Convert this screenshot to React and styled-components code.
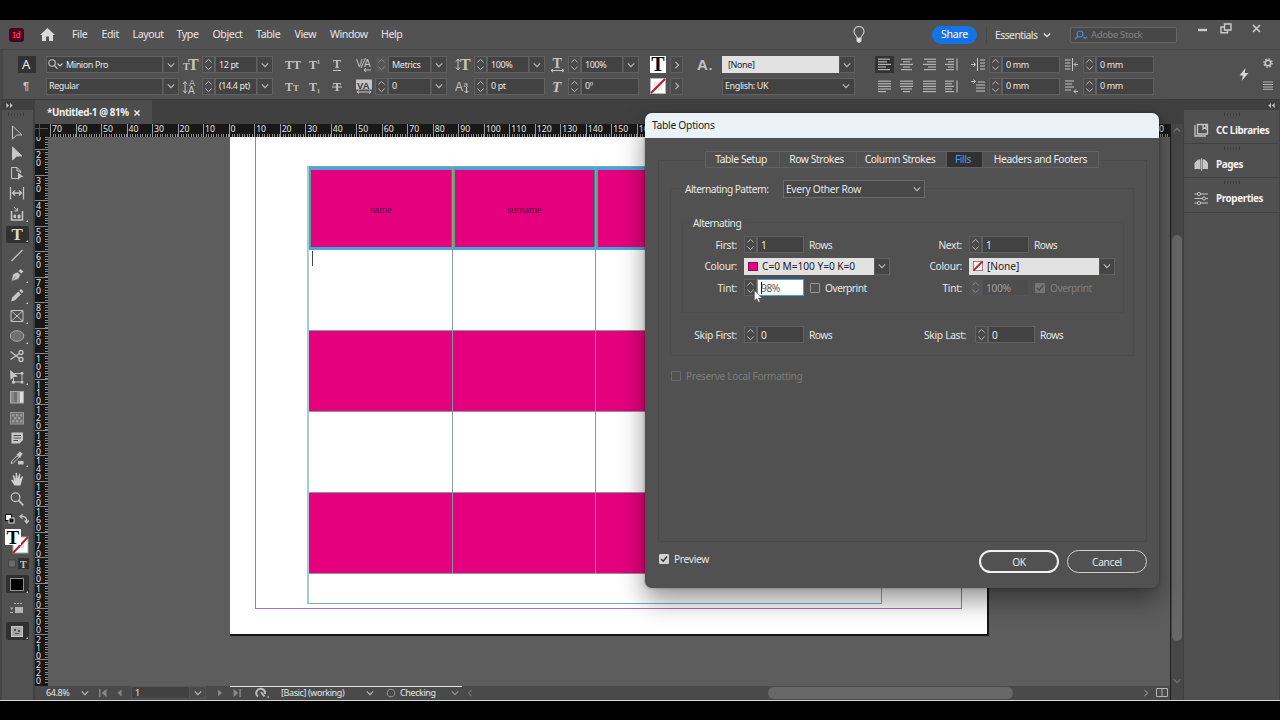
import React from 'react'
import styled, { createGlobalStyle } from 'styled-components'

const GlobalStyle = createGlobalStyle`
  * { box-sizing: border-box; }
  body {
    margin: 0;
    background: #000;
    overflow: hidden;
    font-family: "Noto Sans", "Open Sans", sans-serif;
    font-size: 10.2px;
    letter-spacing: -0.3px;
    color: #e6e6e6;
  }
  svg { display: block; flex: none; }
`

const Screen = styled.div`
  width: 1280px;
  height: 720px;
  padding: 20px 0 19px;
  background: #000;
`
const AppWindow = styled.div`
  position: relative;
  height: 681px;
  display: flex;
  flex-direction: column;
  background: #535353;
  border-bottom: 1px solid #d4d8d6;
`

/* ---------- menu bar ---------- */

const MenuBar = styled.div`
  height: 30px;
  flex: none;
  display: flex;
  align-items: center;
  background: #525252;
  border-bottom: 1px solid #454545;
  padding-left: 9px;
`
const Logo = styled.div`
  width: 15px;
  height: 14px;
  border-radius: 3px;
  background: #49021f;
  color: #ff3366;
  font-size: 8.5px;
  font-weight: 600;
  line-height: 13px;
  text-align: center;
`
const HomeBox = styled.div`
  margin: 0 17px 0 16px;
`
const MenuItem = styled.div`
  width: ${p => p.$w}px;
  font-size: 10.6px;
  line-height: 14px;
  margin-top: -1px;
  letter-spacing: -0.4px;
  white-space: nowrap;
`
const BulbBox = styled.div`
  margin-left: 444px;
  margin-top: -1px;
  width: 79px;
`
const Share = styled.div`
  width: 45px;
  height: 18px;
  border-radius: 9px;
  background: #1473e6;
  color: #fff;
  font-size: 10.6px;
  line-height: 17px;
  text-align: center;
`
const Workspace = styled.div`
  display: flex;
  align-items: center;
  gap: 6px;
  margin-left: 9px;
  padding-left: 8px;
  border-left: 1px solid #494949;
  width: 84px;
  height: 18px;
  font-size: 10.4px;
  letter-spacing: -0.55px;
  white-space: nowrap;
`
const StockSearch = styled.div`
  width: 107px;
  height: 16px;
  border: 1px solid #666;
  border-radius: 2px;
  background: #474747;
  color: #838383;
  display: flex;
  align-items: center;
  gap: 3px;
  padding-left: 3px;
  font-size: 9.4px;
`
const WindowButtons = styled.div`
  display: flex;
  align-items: center;
  margin: -13px 0 0 21px;
  svg { margin-right: 13px; }
  svg:nth-child(2) { margin-right: 20px; }
`

/* ---------- control bar ---------- */

const ControlBar = styled.div`
  height: 50px;
  flex: none;
  display: flex;
  align-items: flex-start;
  background: #515151;
  border-bottom: 1px solid #3c3c3c;
  border-left: 3px solid #474747;
  padding: 6px 0 0 15px;
  font-size: 9px;
  letter-spacing: -0.4px;
`
const Stack = styled.div`
  flex: none;
  display: grid;
  grid-template-rows: 17px 17px;
  row-gap: 4.5px;
  width: ${p => p.$w}px;
  margin-left: ${p => p.$ml || 0}px;
`
const Cell = styled.div`
  display: flex;
  align-items: center;
  justify-content: center;
  background: ${p => (p.$on ? '#323232' : 'transparent')};
`
const Spin = styled.div`
  flex: none;
  width: 13px;
  height: 17px;
  border: 1px solid ${p => (p.$dim ? '#545454' : '#606060')};
  background: ${p => (p.$dim ? '#565656' : '#4a4a4a')};
  display: flex;
  align-items: center;
  justify-content: center;
`
const Input = styled.div`
  flex: none;
  width: ${p => p.$w}px;
  height: 17px;
  border: 1px solid ${p => (p.$light ? '#e2e2e2' : p.$dim ? '#535353' : '#616161')};
  background: ${p => (p.$light ? '#e2e2e2' : p.$dim ? '#4d4d4d' : '#424242')};
  color: ${p => (p.$light ? '#222' : p.$dim ? '#a0a0a0' : '#e6e6e6')};
  display: flex;
  align-items: center;
  gap: 3px;
  padding-left: ${p => (p.$pl === undefined ? 3 : p.$pl)}px;
  line-height: 14px;
  white-space: nowrap;
`
const LanguageSelect = styled(Input)`
  justify-content: space-between;
  padding: 0 4px 0 2px;
`
const DropBtn = styled.div`
  flex: none;
  width: 16px;
  height: 17px;
  border: 1px solid #616161;
  border-left-color: #565656;
  background: #454545;
  display: flex;
  align-items: center;
  justify-content: center;
`
const Row = styled.div`
  display: flex;
  align-items: center;
`
const Field = styled(Row)`
  height: 17px;
`
const Quick = styled.div`
  margin: 12px 0 0 85px;
`
const FarRight = styled.div`
  display: flex;
  flex-direction: column;
  align-items: center;
  gap: 13px;
  margin: 2px 0 0 14px;
`

/* ---------- body ---------- */

const Body = styled.div`
  flex: 1;
  min-height: 0;
  display: flex;
  background: #404040;
`
const Tools = styled.div`
  width: 33px;
  flex: none;
  margin-right: 2px;
  display: flex;
  flex-direction: column;
  background: #515151;
  border-left: 2px solid #454545;
`
const StripHead = styled.div`
  height: 10px;
  flex: none;
  display: flex;
  align-items: center;
  justify-content: ${p => (p.$end ? 'flex-end' : 'flex-start')};
  padding: 0 4px;
  background: #404040;
`
const Grip = styled.div`
  width: 17px;
  height: 3px;
  margin: ${p => p.$m};
  background: repeating-linear-gradient(90deg, #3e3e3e 0 1px, transparent 1px 3px);
`
const ToolSlot = styled.div`
  position: relative;
  height: 20.4px;
  flex: none;
  display: flex;
  align-items: center;
  justify-content: center;
  width: 24px;
  margin-left: 3px;
`
const ToolFace = styled.div`
  width: 23px;
  height: ${p => p.$h || 17}px;
  border-radius: 2px;
  display: flex;
  align-items: center;
  justify-content: center;
  background: ${p => (p.$on ? '#303030' : 'transparent')};
`
const Corner = styled.i`
  position: absolute;
  right: 1px;
  bottom: 2px;
  border: 1.5px solid;
  border-color: transparent #ddd #ddd transparent;
`
const ToolFoot = styled.div`
  display: flex;
  flex-direction: column;
  margin: 1px 0 0 3px;
  width: 24px;
`
const FootRow = styled.div`
  position: relative;
  height: ${p => p.$h}px;
  display: flex;
  align-items: center;
  justify-content: center;
  gap: 4px;
`

const DocArea = styled.div`
  width: 1135px;
  flex: none;
  display: flex;
  flex-direction: column;
`
const TabBar = styled.div`
  height: 24px;
  flex: none;
  background: #404040;
`
const DocTab = styled.div`
  width: 117px;
  height: 24px;
  display: flex;
  align-items: center;
  gap: 5px;
  padding: 1px 0 0 12px;
  background: #4d4d4d;
  font-weight: 700;
  font-size: 9.8px;
  letter-spacing: -0.38px;
  color: #f0f0f0;
  white-space: nowrap;
`
const RulerRow = styled.div`
  height: 13px;
  flex: none;
  display: flex;
  background: #181818;
`
const RulerCorner = styled.div`
  width: 13px;
  flex: none;
  background:
    linear-gradient(#555, #555) 4px 0 / 1px 13px no-repeat,
    linear-gradient(#555, #555) 0 4px / 13px 1px no-repeat;
`
const HRuler = styled.div`
  flex: 1;
  display: flex;
  overflow: hidden;
  padding-left: 2px;
`
const HMark = styled.div`
  flex: none;
  width: 25.53px;
  height: 13px;
  border-left: 1px solid #9a9a9a;
  padding-left: 1px;
  font-size: 8.7px;
  line-height: 10px;
  letter-spacing: 0;
  background: repeating-linear-gradient(90deg, transparent 0 1.55px, #8c8c8c 1.55px 2.55px) 0 100% / 100% 3px no-repeat;
`
const WorkRow = styled.div`
  flex: 1;
  min-height: 0;
  display: flex;
`
const VRuler = styled.div`
  width: 13px;
  flex: none;
  overflow: hidden;
  background: #181818;
`
const VMarks = styled.div`
  margin-top: -13.2px;
`
const VMark = styled.div`
  height: 25.5px;
  border-top: 1px solid #8a8a8a;
  padding: 1px 0 0 1px;
  font-size: 8.7px;
  line-height: 8px;
  letter-spacing: 0;
  background: repeating-linear-gradient(180deg, transparent 0 1.55px, #8c8c8c 1.55px 2.55px) 100% 0 / 3px 100% no-repeat;
`
const Digit = styled.div`
  height: 8px;
`
const Canvas = styled.div`
  position: relative;
  flex: 1;
  overflow: hidden;
  background: #5d5d5d;
`
const Paper = styled.div`
  position: absolute;
  left: 182px;
  top: 0;
  width: 759px;
  height: 499px;
  background: #fff;
  border: solid #141414;
  border-width: 0 2px 2px 0;
`
const MarginGuide = styled.div`
  position: absolute;
  left: 25px;
  top: 0;
  width: 707px;
  height: 472px;
  border: solid #a873bd;
  border-width: 0 1px 1px 1px;
`
const TextFrame = styled.div`
  position: absolute;
  left: 77px;
  top: 29px;
  width: 575px;
  height: 438px;
  border: 1px solid #76abc8;
  border-left: 2px solid #a3cbdd;
`
const Table = styled.div`
  display: grid;
  grid-template-columns: 144px repeat(3, 143.4px);
  grid-template-rows: 83px repeat(4, 81px);
`
const TableCell = styled.div`
  display: flex;
  align-items: center;
  justify-content: center;
  padding-top: 1px;
  border: solid ${p => (p.$head ? '#a8a06a' : '#8697a8')};
  border-width: ${p => (p.$head ? '0 1px 0 0' : '0 1px 1px 0')};
  background: ${p => (p.$fill ? '#e5007d' : '#fff')};
  box-shadow: ${p => (p.$head ? 'inset 0 3px #45a6d8, inset 0 -3px #45a6d8, inset 2px 0 #4fa98e, inset -1px 0 #3f7f80' : 'none')};
  color: #57123c;
  font: 10.6px "Liberation Serif", serif;
`
const TextCaret = styled.div`
  position: absolute;
  left: 82px;
  top: 114px;
  width: 1px;
  height: 15px;
  background: #444;
`

const StatusBar = styled.div`
  height: 14px;
  flex: none;
  display: flex;
  align-items: center;
  background: linear-gradient(#e4e4e4, #e4e4e4) 195px 0 / 232px 1px no-repeat #4a4a4a;
  font-size: 9px;
  letter-spacing: -0.4px;
  padding: 0 0 1px 11px;
`
const StatusItem = styled.div`
  flex: none;
  width: ${p => p.$w}px;
  display: flex;
  align-items: center;
  white-space: nowrap;
`
const PageField = styled.div`
  width: 59px;
  height: 13px;
  line-height: 11px;
  padding-left: 3px;
  background: #414141;
  border: 1px solid #555;
`
const PageDrop = styled.div`
  width: 16px;
  height: 13px;
  display: flex;
  align-items: center;
  justify-content: center;
  border: 1px solid #555;
  border-left: 0;
`
const HTrack = styled.div`
  flex: 1;
  height: 13px;
  display: flex;
  align-items: center;
  padding-left: 291px;
`
const HThumb = styled.div`
  width: 245px;
  height: 12px;
  border-radius: 6px;
  background: #686868;
  margin-right: 129px;
`

const VScroll = styled.div`
  width: 13px;
  flex: none;
  margin-top: 24px;
  display: flex;
  flex-direction: column;
  align-items: center;
  justify-content: space-between;
  background: #474747;
  border-left: 1px solid #1f1f1f;
  padding: 2px 0 15px;
`
const VThumb = styled.div`
  width: 10px;
  height: 406px;
  margin: 101px 0 auto;
  border-radius: 5px;
  background: #676767;
`
const Dock = styled.div`
  flex: 1;
  display: flex;
  flex-direction: column;
  margin-left: 1px;
  background: #505050;
  border-right: 1px solid #434343;
`
const DockPanel = styled.div`
  height: 34.2px;
  flex: none;
  border-bottom: 1px solid #414141;
`
const DockLabel = styled.div`
  display: flex;
  align-items: center;
  gap: 7px;
  height: 16px;
  margin-top: 6px;
  padding-left: 10px;
  font-weight: 700;
  font-size: 9.9px;
  letter-spacing: -0.4px;
  color: #f2f2f2;
  white-space: nowrap;
`

/* ---------- dialog ---------- */

const Dialog = styled.div`
  position: absolute;
  left: 645px;
  top: 93px;
  width: 514px;
  height: 475px;
  border-radius: 7px;
  overflow: hidden;
  background: #515151;
  box-shadow: 0 12px 26px rgba(0, 0, 0, 0.42), 0 0 3px rgba(0, 0, 0, 0.35);
`
const DialogTitle = styled.div`
  height: 25px;
  padding-left: 7px;
  line-height: 25px;
  font-size: 10.3px;
  background: #eaf2f7;
  letter-spacing: -0.3px;
  color: #222;
`
const TabPanel = styled.div`
  margin: 22px 12px 0 13px;
  height: 382px;
  border: 1px solid #4a4a4a;
`
const Tabs = styled.div`
  display: flex;
  width: 394px;
  margin: -10px 0 0 46px;
  border: 1px solid #626262;
`
const Tab = styled.div`
  width: ${p => p.$w}px;
  height: 15px;
  line-height: 15px;
  text-align: center;
  padding-right: 3px;
  font-size: 10.3px;
  letter-spacing: -0.4px;
  white-space: nowrap;
  border-right: 1px solid #5c5c5c;
  background: ${p => (p.$on ? '#303030' : '#515151')};
  color: ${p => (p.$on ? '#4b9be8' : '#ececec')};
  &:last-child { border-right: 0; padding-right: 0; }
`
const PatternBox = styled.div`
  margin: 20px 12px 0 11px;
  height: 168px;
  border: 1px solid #4c4c4c;
`
const PatternRow = styled.div`
  display: flex;
  align-items: center;
  width: 242px;
  height: 17px;
  margin: -9px 0 0 12px;
  padding-left: 2px;
  background: #515151;
`
const PatternLabel = styled.div`
  width: 98px;
  letter-spacing: -0.55px;
`
const Select = styled.div`
  width: 142px;
  height: 18px;
  display: flex;
  align-items: center;
  justify-content: space-between;
  padding: 0 3px 0 2px;
  border: 1px solid #6a6a6a;
  background: #484848;
`
const AlternatingBox = styled.div`
  margin: 25px 9px 0 11px;
  height: 91px;
  border: 1px solid #4d4d4d;
`
const Legend = styled.div`
  width: 54px;
  margin: -7px 0 0 9px;
  padding-left: 1px;
  line-height: 14px;
  letter-spacing: -0.5px;
  background: #515151;
`
const Pair = styled.div`
  display: grid;
  grid-template-columns: ${p => p.$cols};
  height: ${p => p.$h || 21.6}px;
  margin-top: ${p => p.$mt || 0}px;
  align-items: center;
`
const Label = styled.div`
  text-align: right;
  padding-right: ${p => p.$pr || 7}px;
  white-space: nowrap;
`
const Unit = styled.div`
  margin-left: 5px;
  letter-spacing: -0.5px;
  color: ${p => (p.$dim ? '#7f7f7f' : '#e6e6e6')};
`
const ColourInput = styled(Input)`
  gap: 4px;
  letter-spacing: -0.05px;
`
const Check = styled.div`
  flex: none;
  width: 10px;
  height: 10px;
  margin-left: ${p => p.$ml || 0}px;
  border: 1px solid ${p => p.$c || '#999'};
  background: ${p => p.$bg || 'transparent'};
  border-radius: 1px;
  display: flex;
  align-items: center;
  justify-content: center;
`
const TintInput = styled(Input)`
  background: #fff;
  border-color: #4a9ce0;
  color: #555;
  letter-spacing: -0.4px;
`
const InputCaret = styled.i`
  width: 1px;
  height: 12px;
  margin-right: -4px;
  background: #111;
`
const Swatch = styled.i`
  width: 10px;
  height: 9px;
  border: 1px solid #8c1058;
  background: #e5007d;
`
const Preserve = styled.div`
  display: flex;
  align-items: center;
  gap: 5px;
  margin: 13px 0 0 12px;
  letter-spacing: -0.35px;
  color: #7b7b7b;
`
const Footer = styled.div`
  display: flex;
  align-items: center;
  height: 24px;
  margin-top: 5px;
  padding: 0 12px 0 14px;
`
const PreviewText = styled.div`
  margin: 0 auto 0 5px;
`
const PillButton = styled.div`
  width: 80px;
  height: 23px;
  margin-left: 8px;
  margin-top: 5px;
  border: ${p => (p.$primary ? '2px solid #f2f2f2' : '1px solid #cfcfcf')};
  border-radius: 12px;
  display: flex;
  align-items: center;
  justify-content: center;
`
const Pointer = styled.div`
  position: absolute;
  left: 754px;
  top: 270px;
`

/* ---------- icons ---------- */

const Chevron = ({ s = 8, dir = 'down', c = '#bdbdbd', w = 1.1 }) => {
  const r = { down: 0, left: 90, up: 180, right: 270 }[dir]
  return (
    <svg width={s} height={s} viewBox="0 0 8 8">
      <path d="M0.8 2.4 L4 5.6 L7.2 2.4" transform={`rotate(${r} 4 4)`} fill="none" stroke={c} strokeWidth={w} />
    </svg>
  )
}

const Stepper = ({ dim }) => (
  <Spin $dim={dim}>
    <svg width="9" height="15" viewBox="0 0 9 15">
      <path d="M1.3 5.4 L4.5 2.4 L7.7 5.4 M1.3 9.6 L4.5 12.6 L7.7 9.6" fill="none" stroke={dim ? '#8a8a8a' : '#b8b8b8'} strokeWidth="1" />
    </svg>
  </Spin>
)

const Drop = () => <DropBtn><Chevron /></DropBtn>

const Glyph = ({ w = 18, children }) => (
  <svg width={w} height="17" viewBox={`0 0 ${w} 17`} fill="none" stroke="#c4c4c4" strokeWidth="1">{children}</svg>
)

const L = ({ x, y, s = 13, f = 'Liberation Serif', b = 700, c = '#c4c4c4', children }) => (
  <text x={x} y={y} fontFamily={`"${f}"`} fontSize={s} fontWeight={b} fill={c} stroke="none" letterSpacing="0">{children}</text>
)

const lineSets = {
  left: [[0, 12], [0, 9], [0, 13], [0, 8], [0, 12]],
  center: [[1, 12], [3, 10], [0, 13], [3, 10], [1, 12]],
  right: [[1, 13], [4, 13], [0, 13], [5, 13], [1, 13]],
  spine: [[1, 9], [3, 9], [0, 9], [3, 9], [1, 9]],
  jleft: [[0, 13], [0, 13], [0, 13], [0, 13], [0, 8]],
  jcenter: [[0, 13], [0, 13], [0, 13], [1, 12], [3, 10]],
  jall: [[0, 13], [0, 13], [0, 13], [0, 13], [0, 13]],
  away: [[0, 9], [0, 7], [0, 9], [0, 7], [0, 9]],
}
const Lines = ({ kind }) => (
  <svg width="13" height="13" viewBox="0 0 13 13" stroke="#b4b4b4" strokeWidth="1.2">
    {lineSets[kind].map(([a, b], i) => <path key={i} d={`M${a} ${1.2 + i * 2.6} H${b}`} />)}
    {(kind === 'spine' || kind === 'away') && <path d="M12 0.5 V12.5" />}
  </svg>
)

const IndentIcon = ({ kind }) => (
  <Glyph w={15}>
    {kind === 'left' && <path d="M6.5 2 V15 M9 4 H14 M9 7 H14 M9 10 H14 M9 13 H14 M0 8.5 H4 M2.5 6.5 L4.8 8.5 L2.5 10.5" />}
    {kind === 'right' && <path d="M8.5 2 V15 M1 4 H6.5 M1 7 H6.5 M1 10 H6.5 M1 13 H6.5 M10.5 8.5 H14 M12 6.5 L10 8.5 L12 10.5" />}
    {kind === 'first' && <path d="M7 4 H14 M5 7 H14 M5 10 H14 M5 13 H14 M0 3.5 H4 M2.5 1.5 L4.5 3.5 L2.5 5.5" />}
    {kind === 'last' && <path d="M1 3 H10 M1 6 H8 M1 9 H10 M1 12 H7 M10 13.5 H14 M12 11.5 L10 13.5 L12 15.5" />}
  </Glyph>
)

const NoneSwatch = ({ s = 16 }) => (
  <svg width={s} height={s} viewBox="0 0 16 16">
    <rect x="0.5" y="0.5" width="15" height="15" fill="#fff" stroke={s < 16 ? '#8a3038' : '#b9b9b9'} />
    <rect x="4" y="4" width="8" height="8" fill="#e9e9e9" />
    <path d="M1 15 L15 1" stroke="#b3202c" strokeWidth={s < 16 ? 3 : 2.2} />
  </svg>
)

const DoubleArrow = ({ left }) => (
  <svg width="7" height="5" viewBox="0 0 7 5" fill="#c9c9c9">
    {left ? <path d="M3 0 V5 L0.4 2.5Z M6.6 0 V5 L4 2.5Z" /> : <path d="M0.4 0 L3 2.5 L0.4 5Z M4 0 L6.6 2.5 L4 5Z" />}
  </svg>
)

const toolIcons = [
  { d: <path d="M3.5 2 L13 11 L7.8 11 L3.5 15Z" /> },
  { d: <path d="M3.5 2 L13 11 L7.8 11 L3.5 15Z" fill="#c8c8c8" /> },
  { d: <g><path d="M9 13.5 H2.5 V2.5 H8 L11.5 6 V8 M8 2.5 V6 H11.5" /><path d="M9 7.5 L14.5 12 L11.5 12.3 L9 15Z" fill="#c8c8c8" stroke="none" /></g> },
  { d: <path d="M1.5 2 V14.5 M14.5 2 V14.5 M3.5 8 H12.5 M6 5.5 L3.5 8 L6 10.5 M10 5.5 L12.5 8 L10 10.5" strokeWidth="1.3" /> },
  { d: <g><path d="M2.5 5 V14 H13.5 V5" strokeWidth="1.6" /><path d="M5 1 L8 4.5 M8.5 2 V5 H5.5" /><path d="M5 12 V9 H6.5 V12 M9 12 V9 H11 V12Z" fill="#c8c8c8" /></g>, more: 1 },
  { on: 1, d: <L x={2.6} y={14} s={17} c="#d8d8d8">T</L>, more: 1 },
  { d: <path d="M2.5 14 L13.5 3" strokeWidth="1.3" /> },
  { d: <path d="M2 14.5 L4 7 L8.5 5 L11.5 8 L9.5 12 L2 14.5 M9.3 4 L11.8 1.8 L14.5 4.5 L12.3 7Z M2.5 14 L7 9.5" fill="#c8c8c8" stroke="#5a5a5a" strokeWidth="0.7" />, more: 1 },
  { d: <path d="M2 14.5 L3.2 10.5 L9.3 4.5 L12 7.2 L6 13.3Z M10.2 3.6 L12 2 L14.5 4.6 L12.9 6.3Z" fill="#c8c8c8" stroke="none" />, more: 1 },
  { d: <path d="M2 2.5 H14 V13.5 H2Z M2 2.5 L14 13.5 M14 2.5 L2 13.5" />, more: 1 },
  { d: <ellipse cx="8" cy="8" rx="6.8" ry="5.3" fill="#707070" stroke="#a8a8a8" />, more: 1 },
  { d: <g strokeWidth="1.3"><circle cx="12" cy="4.5" r="2" /><circle cx="12" cy="11.5" r="2" /><path d="M10.5 5.5 L1.5 11.5 M10.5 10.5 L1.5 3.5" /></g> },
  { d: <g><path d="M5.5 4.5 H13 V13 H4.5 V9" /><path d="M1 1 L9 7.5 L5 8 L1.5 11Z M3 12 h3 v2.5 h-3Z M11.8 3 h2.5 v2.5 h-2.5Z M11.8 12 h2.5 v2.5 h-2.5Z" fill="#c8c8c8" stroke="none" /></g>, more: 1 },
  { d: <g stroke="none"><path d="M1.5 2.5 H5 V14 H1.5Z" fill="#888" /><path d="M5 2.5 H8 V14 H5Z" fill="#707070" /><path d="M8 2.5 H11 V14 H8Z" fill="#9a9a9a" /><path d="M11 2.5 H14.5 V14 H11Z" fill="#dedede" /><rect x="1.5" y="2.5" width="13" height="11.5" stroke="#aaa" /></g> },
  { d: <g><rect x="1.5" y="2.5" width="13" height="11.5" fill="#6c6c6c" stroke="#999" /><path d="M3 4 h2.5 v2.5 H3Z M7 4 h2.5 v2.5 H7Z M11 4 h2.5 v2.5 H11Z M5 7 h2.5 v2.5 H5Z M9 7 h2.5 v2.5 H9Z M3 10 h2.5 v2.5 H3Z M7 10 h2.5 v2.5 H7Z M11 10 h2.5 v2.5 H11Z" fill="#9a9a9a" stroke="none" /></g> },
  { d: <g><path d="M2.5 2.5 H14 V10 L10.5 13.5 H2.5Z" fill="#c8c8c8" stroke="none" /><path d="M4.5 5.5 H12 M4.5 8 H12 M4.5 10.5 H9" stroke="#4a4a4a" /></g> },
  { d: <g><path d="M2 13.5 L2.8 11 L8 5.8 L9.8 7.6 L4.5 12.8Z" /><path d="M7.5 4.5 L9 3.5 L11 1.5 L13.8 3.8 L12 6 L11.3 8.2Z M9 11 h5.5 v3.5 h-5.5Z" fill="#c8c8c8" stroke="none" /></g>, more: 1 },
  { d: <path d="M5.5 14.5 L2 9.2 L3 8.5 L5.2 10 L3.6 4.5 L4.8 4 L6.7 8 L6.6 2 L7.9 1.8 L8.7 7.6 L10.2 2.6 L11.4 3 L10.7 8.2 L13 5 L14 5.8 L11.5 14.5Z" fill="#cfcfcf" stroke="none" /> },
  { d: <g strokeWidth="1.3"><circle cx="6.5" cy="6.2" r="4.3" /><path d="M9.7 9.4 L14.3 14.3" strokeWidth="1.8" /></g> },
]

const HomeIcon = () => (
  <svg width="15" height="13" viewBox="0 0 15 13" fill="#dadada">
    <path d="M7.5 0 L15 7 H13 V13 H9 V8.5 H6 V13 H2 V7 H0Z" />
  </svg>
)

const menus = [['File', 29.5], ['Edit', 31], ['Layout', 44], ['Type', 36], ['Object', 43.5], ['Table', 38.5], ['View', 35.5], ['Window', 51], ['Help', 28]]

const hMarks = Array.from({ length: 44 }, (_, i) => Math.abs(i * 10 - 70))
const vMarks = Array.from({ length: 22 }, (_, i) => String(10 + i * 10))

function TopMenu() {
  return (
    <MenuBar>
      <Logo>Id</Logo>
      <HomeBox><HomeIcon /></HomeBox>
      {menus.map(([name, w]) => <MenuItem key={name} $w={w}>{name}</MenuItem>)}
      <BulbBox>
        <svg width="12" height="17" viewBox="0 0 12 17" fill="none" stroke="#d0d0d0" strokeWidth="1.1">
          <path d="M4 12 C4 9.5 1 8.8 1 5.5 A5 5 0 0 1 11 5.5 C11 8.8 8 9.5 8 12Z" />
          <path d="M4 12.5 H8 V15 L6 16.5 L4 15Z" fill="#e8e8e8" />
        </svg>
      </BulbBox>
      <Share>Share</Share>
      <Workspace>Essentials <Chevron c="#ddd" w={1.4} /></Workspace>
      <StockSearch>
        <svg width="14" height="10" viewBox="0 0 14 10" fill="none" stroke="#4a90d0" strokeWidth="1.2">
          <circle cx="6" cy="4" r="3" /><path d="M4 6.2 L0.8 9.3 M9.5 7 L11.3 8.5 L13 7" />
        </svg>
        Adobe Stock
      </StockSearch>
      <WindowButtons>
        <svg width="9" height="9" viewBox="0 0 9 9"><path d="M0 6 H9" stroke="#ccc" strokeWidth="2.4" /></svg>
        <svg width="12" height="11" viewBox="0 0 12 11" fill="none" stroke="#ccc" strokeWidth="1.4"><path d="M4.5 1 H11 V7 H4.5Z M4.5 4 H1 V9.8 H7.5 V7" /></svg>
        <svg width="9" height="9" viewBox="0 0 9 9" stroke="#ccc" strokeWidth="1.6"><path d="M1 1 L8 8 M8 1 L1 8" /></svg>
      </WindowButtons>
    </MenuBar>
  )
}

function Controls() {
  return (
    <ControlBar>
      <Stack $w={18}>
        <Cell $on><Glyph w={12}><L x={1} y={13} s={13} f="Noto Sans" b={400} c="#e8e8e8">A</L></Glyph></Cell>
        <Cell><Glyph w={12}><L x={2} y={12} s={11} f="Liberation Sans">¶</L></Glyph></Cell>
      </Stack>
      <Stack $w={133} $ml={10}>
        <Field>
          <Input $w={117} $pl={1}>
            <svg width="15" height="11" viewBox="0 0 15 11" fill="none" stroke="#ccc" strokeWidth="1.1"><circle cx="4" cy="4" r="3.2" /><path d="M6.3 6.3 L9.5 9.8 M9.5 4.5 L12 7 L14.5 4.5" /></svg>
            <span>Minion Pro</span>
          </Input>
          <Drop />
        </Field>
        <Field><Input $w={117} $pl={2}>Regular</Input><Drop /></Field>
      </Stack>
      <Stack $w={17} $ml={3}>
        <Glyph w={17}><L x={1} y={14} s={10}>T</L><L x={6} y={14} s={16}>T</L></Glyph>
        <Glyph w={17}><path d="M3 4 V15 M1 6 L3 3.5 L5 6 M1 12.5 L3 15 L5 12.5" /><L x={7} y={8} s={9} f="Liberation Sans" b={400}>A</L><L x={6} y={16} s={10} f="Liberation Sans" b={400}>A</L></Glyph>
      </Stack>
      <Stack $w={71} $ml={3}>
        <Field><Stepper /><Input $w={42}>12 pt</Input><Drop /></Field>
        <Field><Stepper /><Input $w={42}>(14.4 pt)</Input><Drop /></Field>
      </Stack>
      <Stack $w={66} $ml={10}>
        <Glyph w={66}><L x={2} y={13} s={12}>TT</L><L x={26} y={13} s={12}>T</L><L x={34} y={8} s={6}>1</L><L x={50} y={12} s={12}>T</L><path d="M50 14.5 H58" /></Glyph>
        <Glyph w={66}><L x={2} y={13} s={12}>T</L><L x={10} y={13} s={9}>T</L><L x={26} y={13} s={12}>T</L><L x={34} y={15} s={6}>1</L><L x={50} y={13} s={12}>T</L><path d="M49 9 H59" /></Glyph>
      </Stack>
      <Stack $w={17} $ml={7}>
        <Glyph w={17}><L x={0} y={11} s={10} f="Liberation Sans" b={400}>V</L><L x={8} y={11} s={10} f="Liberation Sans" b={400}>A</L><path d="M5 12 L9.5 2 M15 14 H8 M10 12 L8 14 L10 16" /></Glyph>
        <Glyph w={17}><rect x="0.5" y="2" width="15" height="9" fill="#c4c4c4" /><L x={1} y={10.5} s={9.5} f="Liberation Sans" c="#3c3c3c">VA</L><path d="M1 14 H15 M3 12.5 L1 14 L3 15.5 M13 12.5 L15 14 L13 15.5" /></Glyph>
      </Stack>
      <Stack $w={72} $ml={2}>
        <Field><Stepper dim /><Input $w={43}>Metrics</Input><Drop /></Field>
        <Field><Stepper /><Input $w={43}>0</Input><Drop /></Field>
      </Stack>
      <Stack $w={17} $ml={8}>
        <Glyph w={17}><path d="M3 3 V14 M1 5.5 L3 3 L5 5.5 M1 11.5 L3 14 L5 11.5" /><L x={5} y={14} s={16}>T</L></Glyph>
        <Glyph w={17}><L x={0} y={13} s={12} f="Liberation Sans" b={400}>A</L><L x={8.5} y={9} s={8} f="Liberation Sans" b={400}>a</L><path d="M11.5 9 V15 M9.5 13 L11.5 15 L13.5 13" /></Glyph>
      </Stack>
      <Stack $w={71} $ml={2}>
        <Field><Stepper /><Input $w={42}>100%</Input><Drop /></Field>
        <Field><Stepper /><Input $w={58}>0 pt</Input></Field>
      </Stack>
      <Stack $w={17} $ml={5}>
        <Glyph w={17}><L x={2.5} y={12} s={14}>T</L><path d="M1 14.5 H14 M3 13 L1 14.5 L3 16 M12 13 L14 14.5 L12 16" /></Glyph>
        <Glyph w={17}><g fontStyle="italic"><L x={2} y={14} s={15}>T</L></g></Glyph>
      </Stack>
      <Stack $w={71} $ml={1}>
        <Field><Stepper /><Input $w={42}>100%</Input><Drop /></Field>
        <Field><Stepper /><Input $w={58}>0º</Input></Field>
      </Stack>
      <Stack $w={16} $ml={11}>
        <svg width="16" height="17" viewBox="0 0 16 17"><rect width="16" height="17" fill="#fff" /><L x={1.2} y={15} s={20} c="#000">T</L></svg>
        <NoneSwatch />
      </Stack>
      <Stack $w={13} $ml={4}>
        <Spin><Chevron dir="right" /></Spin>
        <Spin><Chevron dir="right" /></Spin>
      </Stack>
      <Stack $w={18} $ml={14}>
        <Glyph w={18}><L x={0} y={14} s={15} f="Liberation Sans">A</L><path d="M12.5 13 h2" strokeWidth="2" /></Glyph>
      </Stack>
      <Stack $w={133} $ml={7}>
        <Field><Input $w={117} $light $pl={5}>[None]</Input><Drop /></Field>
        <Field>
          <LanguageSelect $w={133}>English: UK<Chevron /></LanguageSelect>
        </Field>
      </Stack>
      {[['left', 'jleft', 20], ['center', 'jcenter', 4], ['right', 'jall', 4], ['spine', 'away', 4]].map(([a, b, ml]) => (
        <Stack key={a} $w={18.5} $ml={ml}>
          <Cell $on={a === 'left'}><Lines kind={a} /></Cell>
          <Cell><Lines kind={b} /></Cell>
        </Stack>
      ))}
      <Stack $w={16} $ml={10}><IndentIcon kind="left" /><IndentIcon kind="first" /></Stack>
      <Stack $w={71} $ml={2}>
        <Field><Stepper /><Input $w={58}>0 mm</Input></Field>
        <Field><Stepper /><Input $w={58}>0 mm</Input></Field>
      </Stack>
      <Stack $w={16} $ml={4}><IndentIcon kind="right" /><IndentIcon kind="last" /></Stack>
      <Stack $w={71} $ml={3}>
        <Field><Stepper /><Input $w={58}>0 mm</Input></Field>
        <Field><Stepper /><Input $w={58}>0 mm</Input></Field>
      </Stack>
      <Quick>
        <svg width="10" height="13" viewBox="0 0 10 13"><path d="M6.5 0 L0.5 7.5 H4 L2.5 13 L9.5 5 H5.8Z" fill="#d6d6d6" /></svg>
      </Quick>
      <FarRight>
        <svg width="10" height="10" viewBox="0 0 10 10" fill="none" stroke="#c8c8c8"><circle cx="5" cy="5" r="2.8" strokeWidth="1.6" /><circle cx="5" cy="5" r="4.2" strokeWidth="1.2" strokeDasharray="1.6 1.7" /></svg>
        <svg width="10" height="9" viewBox="0 0 10 9" stroke="#b4b4b4"><path d="M0 1 H10 M0 3.5 H10 M0 6 H10 M0 8.3 H10" strokeWidth="1.1" /></svg>
      </FarRight>
    </ControlBar>
  )
}

function ToolPanel() {
  return (
    <Tools>
      <StripHead><DoubleArrow /></StripHead>
      <Grip $m="3px 0 6px 6px" />
      {toolIcons.map((t, i) => (
        <ToolSlot key={i}>
          <ToolFace $on={t.on}>
            <svg width="16" height="16" viewBox="0 0 16 16" fill="none" stroke="#c4c4c4">{t.d}</svg>
          </ToolFace>
          {t.more && <Corner />}
        </ToolSlot>
      ))}
      <ToolFoot>
        <FootRow $h={18}>
          <svg width="10" height="10" viewBox="0 0 10 10"><rect x="0.5" y="0.5" width="6" height="6" fill="#fff" stroke="#111" /><rect x="4" y="4" width="5" height="5" fill="#111" stroke="#ddd" /></svg>
          <svg width="10" height="10" viewBox="0 0 10 10" fill="none" stroke="#c4c4c4" strokeWidth="1.4"><path d="M2 2.5 C6 2 8 4 7.8 8 M3.5 0.5 L1 2.5 L3.5 4.5 M5.7 6.5 L7.8 9 L9.8 6.5" /></svg>
        </FootRow>
        <FootRow $h={26}>
          <svg width="24" height="25" viewBox="0 0 24 25">
            <rect x="8" y="8" width="15" height="16" fill="#fff" stroke="#aaa" /><rect x="13" y="13" width="6" height="6" fill="#ddd" />
            <path d="M8 24 L23 8" stroke="#b3202c" strokeWidth="2" />
            <rect x="0" y="0" width="16" height="16" fill="#fff" /><L x={1.5} y={14.5} s={19} c="#000">T</L>
          </svg>
        </FootRow>
        <FootRow $h={19}>
          <svg width="24" height="11" viewBox="0 0 24 11"><rect x="3.5" y="2" width="7" height="7" fill="#6b6b6b" stroke="#444" /><rect x="13" width="11" height="11" fill="#303030" /><L x={15} y={9.5} s={10}>T</L></svg>
        </FootRow>
        <FootRow $h={22}>
          <ToolFace $on $h={18}><svg width="14" height="13" viewBox="0 0 14 13"><rect x="0.5" y="0.5" width="13" height="12" fill="#000" stroke="#909090" /></svg></ToolFace>
          <Corner />
        </FootRow>
        <FootRow $h={26}>
          <svg width="14" height="11" viewBox="0 0 14 11" fill="#b4b4b4"><rect x="5" y="4" width="8" height="6" /><path d="M0 4.5 H3.5 L1.8 7Z M4 0 h2v1h-2Z M7 0 h2v1h-2Z M10 0 h2v1h-2Z M0 9 h3v1h-3Z" /></svg>
        </FootRow>
        <FootRow $h={20}>
          <ToolFace $on $h={18}><svg width="12" height="11" viewBox="0 0 12 11"><rect x="0.5" y="0.5" width="11" height="10" fill="#a6a6a6" stroke="#c8c8c8" /><path d="M3 3 h2v2h-2Z M7 4 h2v2h-2Z M4 7 h4v1h-4Z" fill="#4c4c4c" /></svg></ToolFace>
          <Corner />
        </FootRow>
      </ToolFoot>
    </Tools>
  )
}

function Document() {
  const cells = []
  for (let r = 0; r < 5; r++) {
    for (let c = 0; c < 4; c++) {
      cells.push(
        <TableCell key={r + '-' + c} $head={r === 0} $fill={r % 2 === 0}>
          {r === 0 && ['name', 'surname', '', ''][c]}
        </TableCell>
      )
    }
  }
  return (
    <DocArea>
      <TabBar>
        <DocTab>
          *Untitled-1 @ 81%
          <svg width="6" height="6" viewBox="0 0 6 6" stroke="#eee" strokeWidth="1.5"><path d="M0.5 0.5 L5.5 5.5 M5.5 0.5 L0.5 5.5" /></svg>
        </DocTab>
      </TabBar>
      <RulerRow>
        <RulerCorner />
        <HRuler>{hMarks.map((m, i) => <HMark key={i}>{m}</HMark>)}</HRuler>
      </RulerRow>
      <WorkRow>
        <VRuler>
          <VMarks>
            {vMarks.map(m => <VMark key={m}>{m.split('').map((d, i) => <Digit key={i}>{d}</Digit>)}</VMark>)}
          </VMarks>
        </VRuler>
        <Canvas>
          <Paper>
            <MarginGuide />
            <TextFrame><Table>{cells}</Table></TextFrame>
            <TextCaret />
          </Paper>
        </Canvas>
      </WorkRow>
      <StatusBar>
        <StatusItem $w={35}>64.8%</StatusItem>
        <StatusItem $w={18}><Chevron /></StatusItem>
        <StatusItem $w={18}><svg width="8" height="8" viewBox="0 0 8 8" fill="#888"><path d="M0 0 h1.4 v8 h-1.4Z M7.5 0 V8 L2.5 4Z" /></svg></StatusItem>
        <StatusItem $w={14}><svg width="5" height="8" viewBox="0 0 5 8" fill="#888"><path d="M4.5 0.5 V7.5 L0.5 4Z" /></svg></StatusItem>
        <PageField>1</PageField>
        <PageDrop><Chevron /></PageDrop>
        <StatusItem $w={27}><svg width="26" height="8" viewBox="0 0 26 8" fill="#888"><path d="M12 0.5 V7.5 L16 4Z" /></svg></StatusItem>
        <StatusItem $w={22}><svg width="8" height="8" viewBox="0 0 8 8" fill="#888"><path d="M0.5 0 V8 L5.5 4Z M6.4 0 h1.4 v8 h-1.4Z" /></svg></StatusItem>
        <StatusItem $w={26}><svg width="15" height="11" viewBox="0 0 15 11" fill="none" stroke="#bbb" strokeWidth="2"><path d="M3 9.5 A4.3 4.3 0 1 1 9.8 7 M6 5 L9.5 9.5" /><path d="M12.5 10 h1.5" strokeWidth="1.5" /></svg></StatusItem>
        <StatusItem $w={85}>[Basic] (working)</StatusItem>
        <StatusItem $w={20}><Chevron /></StatusItem>
        <StatusItem $w={14}><svg width="10" height="10" viewBox="0 0 10 10"><circle cx="5" cy="5" r="3.8" fill="none" stroke="#8d8d8d" strokeWidth="1.1" /></svg></StatusItem>
        <StatusItem $w={51}>Checking</StatusItem>
        <StatusItem $w={15}><Chevron c="#999" /></StatusItem>
        <StatusItem $w={11}><Chevron dir="left" c="#777" /></StatusItem>
        <HTrack>
          <HThumb />
          <Chevron dir="right" c="#888" />
        </HTrack>
        <StatusItem $w={14}><svg width="12" height="9" viewBox="0 0 12 9" fill="none" stroke="#b5b5b5"><path d="M0.5 0.5 H11.5 V8.5 H0.5Z M6 0.5 V8.5" /></svg></StatusItem>
      </StatusBar>
    </DocArea>
  )
}

const dockIcons = {
  'CC Libraries': <path d="M1 2 V13 H12 M3.5 1.5 H13.5 V11 H3.5Z M9 1.5 V6 L10.5 4.8 L12 6 V1.5" strokeWidth="1.3" />,
  Pages: <g><path d="M0.5 6 L4 2.5 H6.5 V12 H0.5Z M8.5 2.5 H11 L14 6 V12 H8.5Z" fill="#c8c8c8" stroke="none" /><path d="M7.5 1 V14" strokeWidth="0.9" /></g>,
  Properties: <g><path d="M0.5 3 H14 M0.5 7.5 H14 M0.5 12 H14" /><circle cx="5" cy="3" r="1.6" fill="#505050" /><circle cx="10" cy="7.5" r="1.6" fill="#505050" /><circle cx="5" cy="12" r="1.6" fill="#505050" /></g>,
}

function TableOptions() {
  const cols = '61px 145px 80px 1fr'
  return (
    <Dialog>
      <DialogTitle>Table Options</DialogTitle>
      <TabPanel>
        <Tabs>
          <Tab $w={74}>Table Setup</Tab>
          <Tab $w={77}>Row Strokes</Tab>
          <Tab $w={90}>Column Strokes</Tab>
          <Tab $w={36} $on>Fills</Tab>
          <Tab $w={115}>Headers and Footers</Tab>
        </Tabs>
        <PatternBox>
          <PatternRow>
            <PatternLabel>Alternating Pattern:</PatternLabel>
            <Select>Every Other Row<Chevron /></Select>
          </PatternRow>
          <AlternatingBox>
            <Legend>Alternating</Legend>
            <Pair $cols={cols} $mt={4}>
              <Label>First:</Label>
              <Row><Stepper /><Input $w={47}>1</Input><Unit>Rows</Unit></Row>
              <Label>Next:</Label>
              <Row><Stepper /><Input $w={47}>1</Input><Unit>Rows</Unit></Row>
            </Pair>
            <Pair $cols={cols}>
              <Label>Colour:</Label>
              <Row><ColourInput $w={130} $light><Swatch />C=0 M=100 Y=0 K=0</ColourInput><Drop /></Row>
              <Label>Colour:</Label>
              <Row><ColourInput $w={130} $light><NoneSwatch s={10} />[None]</ColourInput><Drop /></Row>
            </Pair>
            <Pair $cols={cols} $h={21}>
              <Label>Tint:</Label>
              <Row>
                <Stepper /><TintInput $w={47}><InputCaret />98%</TintInput>
                <Check $ml={6} /><Unit>Overprint</Unit>
              </Row>
              <Label>Tint:</Label>
              <Row>
                <Stepper dim /><Input $w={47} $dim>100%</Input>
                <Check $ml={6} $bg="#757575" $c="#757575"><svg width="8" height="8" viewBox="0 0 8 8" fill="none" stroke="#4a4a4a" strokeWidth="1.3"><path d="M1 4 L3.2 6.3 L7 1.5" /></svg></Check>
                <Unit $dim>Overprint</Unit>
              </Row>
            </Pair>
          </AlternatingBox>
          <Pair $cols="73px 145px 86px 1fr" $mt={11}>
            <Label>Skip First:</Label>
            <Row><Stepper /><Input $w={47}>0</Input><Unit>Rows</Unit></Row>
            <Label $pr={9}>Skip Last:</Label>
            <Row><Stepper /><Input $w={47}>0</Input><Unit>Rows</Unit></Row>
          </Pair>
        </PatternBox>
        <Preserve><Check $c="#6e6e6e" />Preserve Local Formatting</Preserve>
      </TabPanel>
      <Footer>
        <Check $bg="#d2d2d2" $c="#d2d2d2"><svg width="8" height="8" viewBox="0 0 8 8" fill="none" stroke="#333" strokeWidth="1.4"><path d="M1 4 L3.2 6.3 L7 1.5" /></svg></Check>
        <PreviewText>Preview</PreviewText>
        <PillButton $primary>OK</PillButton>
        <PillButton>Cancel</PillButton>
      </Footer>
    </Dialog>
  )
}

function App() {
  return (
    <Screen>
      <GlobalStyle />
      <AppWindow>
        <TopMenu />
        <Controls />
        <Body>
          <ToolPanel />
          <Document />
          <VScroll>
            <Chevron dir="up" c="#777" />
            <VThumb />
            <Chevron c="#777" />
          </VScroll>
          <Dock>
            <StripHead $end><DoubleArrow left /></StripHead>
            {Object.keys(dockIcons).map(name => (
              <DockPanel key={name}>
                <Grip $m="3px auto 0 40px" />
                <DockLabel>
                  <svg width="15" height="15" viewBox="0 0 15 15" fill="none" stroke="#c4c4c4">{dockIcons[name]}</svg>
                  {name}
                </DockLabel>
              </DockPanel>
            ))}
          </Dock>
        </Body>
        <TableOptions />
        <Pointer>
          <svg width="9" height="13" viewBox="0 0 9 13"><path d="M0.5 0.8 V10.5 L2.8 8.5 L4.5 12.2 L6 11.5 L4.4 8 H7.8Z" fill="#fff" stroke="#666" strokeWidth="0.5" /></svg>
        </Pointer>
      </AppWindow>
    </Screen>
  )
}

export default App
